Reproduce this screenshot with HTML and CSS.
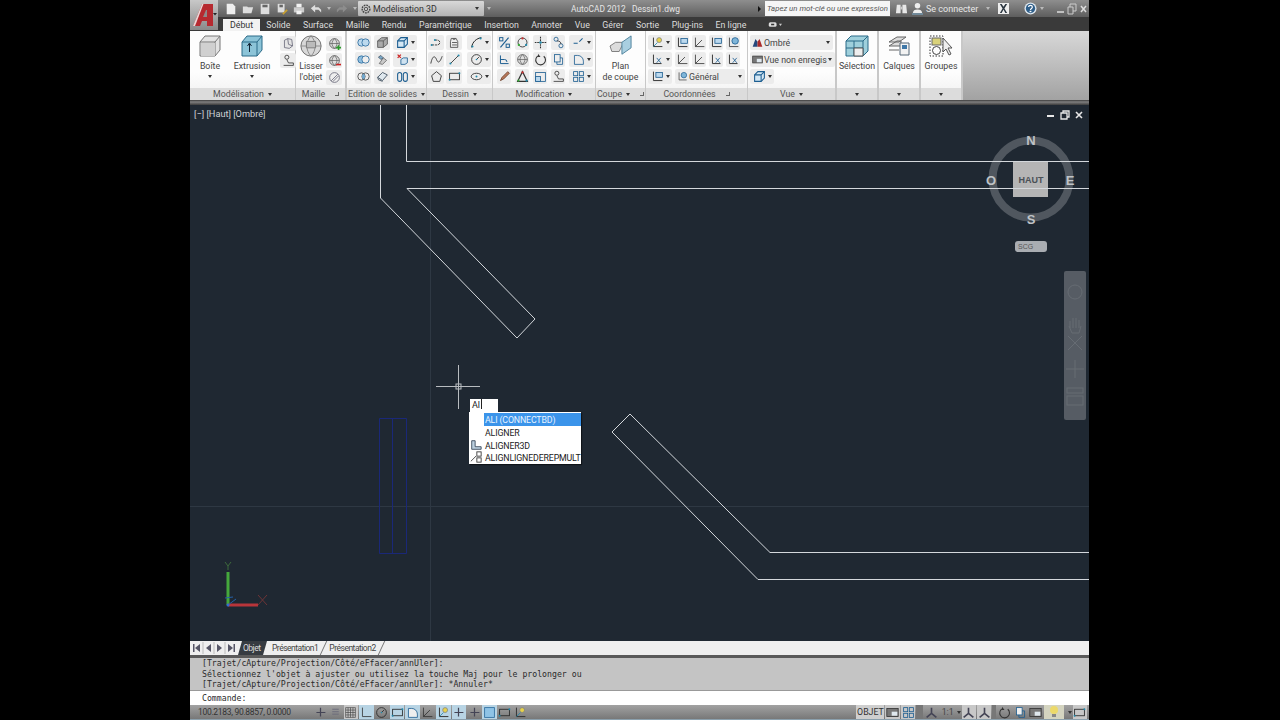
FILE: index.html
```html
<!DOCTYPE html>
<html>
<head>
  <title>AutoCAD 2012 - Dessin1.dwg</title>
  <link rel="stylesheet" href="styles.css">
</head>
<body>
  <svg class="defs">
    <symbol id="union" viewBox="0 0 16 16"><circle cx="5.5" cy="8" r="4.5" fill="#bcd9ee" stroke="#2a6a9c"/><circle cx="10.5" cy="8" r="4.5" fill="#bcd9ee" stroke="#2a6a9c"/></symbol>
    <symbol id="subtract" viewBox="0 0 16 16"><circle cx="5.5" cy="8" r="4.5" fill="#8fbfe0" stroke="#2a6a9c"/><circle cx="10.5" cy="8" r="4.5" fill="#eee" stroke="#2a6a9c"/></symbol>
    <symbol id="intersect" viewBox="0 0 16 16"><circle cx="5.5" cy="8" r="4.5" fill="#eee" stroke="#444"/><circle cx="10.5" cy="8" r="4.5" fill="none" stroke="#444"/><path d="M8 4.3a4.5 4.5 0 0 1 0 7.4a4.5 4.5 0 0 1 0-7.4" fill="#6fa8d0"/></symbol>
    <symbol id="solid" viewBox="0 0 16 16"><path d="M2 6l5-4h7v8l-5 4H2z" fill="#aaa" stroke="#555"/><path d="M2 6h7v8M9 6l5-4" fill="none" stroke="#555"/></symbol>
    <symbol id="cubeblue" viewBox="0 0 16 16"><path d="M2 6l4-4h8v8l-4 4H2z" fill="#d5e8f5" stroke="#1b5d90" stroke-width="1.3"/><path d="M2 6h8v8M10 6l4-4" fill="none" stroke="#1b5d90" stroke-width="1.3"/></symbol>
    <symbol id="brush" viewBox="0 0 16 16"><path d="M4 13l5-7 4 3-5 5z" fill="#c9c9c9" stroke="#666"/><path d="M3 5l3-2 3 3-3 2z" fill="#7aa9c9" stroke="#456"/></symbol>
    <symbol id="press" viewBox="0 0 16 16"><path d="M3 4l4-2 5 1 1 8-4 3-6-1z" fill="#e4e4e4" stroke="#667"/><path d="M7 2l1 7 5 2" fill="none" stroke="#667"/></symbol>
    <symbol id="xbox" viewBox="0 0 16 16"><path d="M2 2l4 4M6 2l-4 4" stroke="#c22" stroke-width="1.5"/><path d="M6 8l3-2h5v6l-3 2H6z" fill="#cfe2f0" stroke="#1b5d90"/></symbol>
    <symbol id="slab" viewBox="0 0 16 16"><path d="M2 9l6-6 6 3-6 7z" fill="#dfe8ee" stroke="#345"/><path d="M2 9l1 3 5 2" fill="none" stroke="#345"/></symbol>
    <symbol id="shell" viewBox="0 0 16 16"><rect x="2" y="3" width="5" height="11" rx="2.5" fill="none" stroke="#1b5d90" stroke-width="1.3"/><rect x="9" y="3" width="5" height="11" rx="2.5" fill="none" stroke="#1b5d90" stroke-width="1.3"/></symbol>
    <symbol id="polyline" viewBox="0 0 16 16"><path d="M2 11h7a3 3 0 0 0 0-6H6" fill="none" stroke="#222" stroke-dasharray="3 1"/><circle cx="2" cy="11" r="1.2" fill="#28a"/><circle cx="6" cy="5" r="1.2" fill="#28a"/></symbol>
    <symbol id="hatch" viewBox="0 0 16 16"><path d="M4 3h6l2 4v7H3V7z" fill="#eee" stroke="#444"/><path d="M5 8h6M5 11h6M6 4h3" stroke="#444"/></symbol>
    <symbol id="arc" viewBox="0 0 16 16"><path d="M2 14C3 7 8 3 14 2" fill="none" stroke="#222" stroke-width="1.2"/><circle cx="3" cy="13" r="1.3" fill="#28a"/><circle cx="13" cy="3" r="1.3" fill="#28a"/></symbol>
    <symbol id="spline" viewBox="0 0 16 16"><path d="M1 13C3 3 6 3 8 8s4 4 7-4" fill="none" stroke="#222"/></symbol>
    <symbol id="line" viewBox="0 0 16 16"><path d="M3 13L13 3" stroke="#222"/><circle cx="3" cy="13" r="1.3" fill="#28a"/><circle cx="13" cy="3" r="1.3" fill="#28a"/></symbol>
    <symbol id="circle" viewBox="0 0 16 16"><circle cx="8" cy="8" r="6" fill="none" stroke="#222"/><path d="M8 8l3-3" stroke="#222"/><circle cx="8" cy="8" r="1" fill="#28a"/></symbol>
    <symbol id="polygon" viewBox="0 0 16 16"><path d="M8 2l6 5-2 7H4L2 7z" fill="none" stroke="#222"/></symbol>
    <symbol id="rect" viewBox="0 0 16 16"><rect x="2" y="4" width="12" height="8" fill="none" stroke="#222"/><circle cx="2" cy="12" r="1.2" fill="#28a"/><circle cx="14" cy="4" r="1.2" fill="#28a"/></symbol>
    <symbol id="ellipse" viewBox="0 0 16 16"><ellipse cx="8" cy="8" rx="6.5" ry="4" fill="none" stroke="#222"/><circle cx="8" cy="8" r="1.2" fill="#28a"/></symbol>
    <symbol id="percent" viewBox="0 0 16 16"><path d="M13 2L3 14" stroke="#1b5d90" stroke-width="1.4"/><rect x="2" y="2" width="4" height="4" fill="none" stroke="#1b5d90" stroke-width="1.2"/><rect x="10" y="10" width="4" height="4" fill="none" stroke="#1b5d90" stroke-width="1.2"/></symbol>
    <symbol id="fillet" viewBox="0 0 16 16"><path d="M3 3v10h10M3 8h5a3 3 0 0 1 3 3" fill="none" stroke="#1b5d90" stroke-width="1.2"/></symbol>
    <symbol id="pencil" viewBox="0 0 16 16"><path d="M3 13l2-4 7-7 2 2-7 7z" fill="#b9785a" stroke="#6b3d28"/></symbol>
    <symbol id="rotate3d" viewBox="0 0 16 16"><circle cx="8" cy="8" r="5.5" fill="none" stroke="#222"/><circle cx="8" cy="3" r="1.4" fill="#c33"/><circle cx="3.5" cy="11" r="1.4" fill="#3a3"/><circle cx="12.5" cy="11" r="1.4" fill="#28a"/></symbol>
    <symbol id="move" viewBox="0 0 16 16"><path d="M8 1v14M1 8h14" stroke="#333" stroke-dasharray="2 1" stroke-width="1.3"/><circle cx="8" cy="8" r="1.6" fill="#28a"/></symbol>
    <symbol id="link" viewBox="0 0 16 16"><circle cx="5" cy="4" r="2.5" fill="none" stroke="#1b5d90"/><circle cx="11" cy="12" r="2.5" fill="none" stroke="#1b5d90"/><path d="M6 6c4 0 5 2 5 4" fill="none" stroke="#333"/></symbol>
    <symbol id="trim" viewBox="0 0 16 16"><path d="M2 9h5M9 7l4-4" stroke="#1b5d90" stroke-width="1.3"/></symbol>
    <symbol id="sphere" viewBox="0 0 16 16"><circle cx="8" cy="8" r="6" fill="#ddd" stroke="#555"/><path d="M2 8h12M8 2c-4 4-4 8 0 12M8 2c4 4 4 8 0 12" fill="none" stroke="#555" stroke-width=".8"/></symbol>
    <symbol id="meshadd" viewBox="0 0 16 16"><use href="#sphere"/><path d="M10 13h6M13 10v6" stroke="#2a9a2a" stroke-width="2"/></symbol>
    <symbol id="meshsub" viewBox="0 0 16 16"><use href="#sphere"/><path d="M10 13h6" stroke="#c22" stroke-width="2"/></symbol>
    <symbol id="nomesh" viewBox="0 0 16 16"><circle cx="8" cy="8" r="6" fill="#eee" stroke="#667"/><path d="M4 12l8-8M6 13l7-7" stroke="#667"/></symbol>
    <symbol id="spin" viewBox="0 0 16 16"><path d="M12 4a6 6 0 1 1-6-1" fill="none" stroke="#333" stroke-width="1.3"/><path d="M5 1v4h3z" fill="#333"/></symbol>
    <symbol id="copy" viewBox="0 0 16 16"><rect x="3" y="2" width="7" height="9" fill="#eee" stroke="#1b5d90"/><path d="M10 6h3v8H6v-3" fill="none" stroke="#1b5d90"/></symbol>
    <symbol id="round" viewBox="0 0 16 16"><path d="M3 14V3h4a7 7 0 0 1 7 7v4z" fill="#eee" stroke="#1b5d90"/></symbol>
    <symbol id="align" viewBox="0 0 16 16"><path d="M8 2L2 14h12z" fill="none" stroke="#333" stroke-width="1.4"/><circle cx="8" cy="3" r="1.4" fill="#c33"/><circle cx="3" cy="13" r="1.4" fill="#3a3"/><circle cx="13" cy="13" r="1.4" fill="#28a"/></symbol>
    <symbol id="anno" viewBox="0 0 16 16"><path d="M8 2v7M8 9l-6 5M8 9l6 5" stroke="#445" stroke-width="2" fill="none"/></symbol>
    <symbol id="scale" viewBox="0 0 16 16"><rect x="2" y="3" width="12" height="11" fill="none" stroke="#1b5d90"/><rect x="2" y="8" width="6" height="6" fill="#bcd9ee" stroke="#1b5d90"/></symbol>
    <symbol id="stretch" viewBox="0 0 16 16"><circle cx="6" cy="4" r="2.5" fill="none" stroke="#333"/><path d="M2 14h12v-3H8L6 7" fill="none" stroke="#333"/></symbol>
    <symbol id="array" viewBox="0 0 16 16"><rect x="2" y="2" width="5" height="5" fill="none" stroke="#1b5d90"/><rect x="9" y="2" width="5" height="5" fill="none" stroke="#1b5d90"/><rect x="2" y="9" width="5" height="5" fill="none" stroke="#1b5d90"/><rect x="9" y="9" width="5" height="5" fill="none" stroke="#1b5d90"/></symbol>
    <symbol id="ucs" viewBox="0 0 16 16"><path d="M3 2v11h11" fill="none" stroke="#333" stroke-width="1.2"/><path d="M3 13l5-5" stroke="#28a"/><circle cx="10" cy="5" r="3" fill="#e8d24a" stroke="#887"/></symbol>
    <symbol id="ucsx" viewBox="0 0 16 16"><path d="M3 2v11h10" fill="none" stroke="#333" stroke-width="1.2"/><path d="M7 6l5 6M12 6l-5 6" stroke="#1b5d90"/></symbol>
    <symbol id="ucsb" viewBox="0 0 16 16"><path d="M3 2v11h11" fill="none" stroke="#333" stroke-width="1.2"/><rect x="6" y="3" width="8" height="6" fill="#bcd9ee" stroke="#1b5d90"/></symbol>
    <symbol id="ang" viewBox="0 0 16 16"><path d="M3 2v11h11M3 13l8-8" fill="none" stroke="#333"/></symbol>
    <symbol id="ucsw" viewBox="0 0 16 16"><path d="M3 2v11h11" fill="none" stroke="#333"/><circle cx="10" cy="6" r="4" fill="#7fb5d8" stroke="#1b5d90"/></symbol>
    <symbol id="vdisp" viewBox="0 0 16 16"><rect x="1" y="3" width="14" height="10" fill="#777" stroke="#333"/><rect x="7" y="7" width="7" height="5" fill="#dfe8ee"/></symbol>
    <symbol id="snap" viewBox="0 0 16 16"><path d="M8 2v11M3 8h11" stroke="#445" stroke-width="1.5"/></symbol>
    <symbol id="dots" viewBox="0 0 16 16"><path d="M4 4h8M4 7h8M4 10h8" stroke="#667" stroke-width="1"/></symbol>
    <symbol id="grid" viewBox="0 0 16 16"><path d="M2 2h12v12H2zM5 2v12M8 2v12M11 2v12M2 5h12M2 8h12M2 11h12" fill="none" stroke="#444" stroke-width=".8"/></symbol>
    <symbol id="ortho" viewBox="0 0 16 16"><path d="M3 2v11h11" fill="none" stroke="#333"/></symbol>
    <symbol id="fill" viewBox="0 0 16 16"><rect x="2" y="2" width="12" height="12" fill="#8ec3e6" stroke="#2a6a9c"/></symbol>
  </svg>

  <div class="app">
    <div class="head">
      <div class="app-btn">
        <svg viewBox="0 0 28 30"><path d="M3 26L12 4h11v22h-6v-5h-5l-2 5z" fill="#b62a30"/><path d="M13 17l3-7h1v7z" fill="#8e8a8a"/><path d="M3 26L12 4h1.500L5 26z" fill="#e9d8d8"/><path d="M23 13h4l-2 2.500z" fill="#222"/></svg>
      </div>
      <div class="head-right">
        <div class="title-bar">
          <div class="quick">
            <svg class="q" viewBox="0 0 14 14"><path d="M2 1h7l3 3v9H2z" fill="#eee"/></svg>
            <svg class="q" viewBox="0 0 14 14"><path d="M1 4h5l1 1h6l-2 7H1z" fill="#ddd"/></svg>
            <svg class="q" viewBox="0 0 14 14"><path d="M2 1h10v12H2z" fill="#ddd"/><path d="M4 2h6v3H4z" fill="#666"/></svg>
            <svg class="q" viewBox="0 0 14 14"><path d="M2 1h8v10H2z" fill="#ddd"/><path d="M4 2h4v3H4z" fill="#666"/><path d="M8 13l5-5" stroke="#c9a030" stroke-width="2"/></svg>
            <svg class="q" viewBox="0 0 14 14"><path d="M1 5h12v6H1z" fill="#ccc"/><path d="M4 1h6v4H4zM4 9h6v4H4z" fill="#f2f2f2"/></svg>
            <svg class="q" viewBox="0 0 14 14"><path d="M1 6l5-4v3h4l3 3v3l-3-3H6v3z" fill="#ddd"/></svg>
            <i class="mini"></i>
            <svg class="q" viewBox="0 0 14 14"><path d="M13 6L8 2v3H4L1 8v3l3-3h4v3z" fill="#8d8d8d"/></svg>
            <i class="mini"></i>
          </div>
          <div class="workspace">
            <svg viewBox="0 0 14 14"><circle cx="7" cy="7" r="4.500" fill="none" stroke="#444" stroke-dasharray="2 1" stroke-width="1.600"/><circle cx="7" cy="7" r="2" fill="none" stroke="#444"/></svg>
            <span>Modélisation 3D</span>
            <i class="mini dark"></i>
          </div>
          <i class="mini"></i>
          <div class="doc-title">AutoCAD 2012&nbsp;&nbsp;&nbsp;Dessin1.dwg</div>
          <i class="arrow-right"></i>
          <div class="search">Tapez un mot-clé ou une expression</div>
          <svg class="bino" viewBox="0 0 14 14"><path d="M2 3h4v9H1zM8 3h4l1 9H8z" fill="#e8e8e8"/><path d="M6 5h2v3H6z" fill="#ccc"/></svg>
          <svg class="user" viewBox="0 0 12 14"><circle cx="6" cy="4" r="3" fill="#eee"/><path d="M1 12c0-3 2-4 5-4s5 1 5 4z" fill="#eee"/><path d="M0 13h12" stroke="#7fb5d8"/></svg>
          <span class="login">Se connecter</span>
          <i class="mini"></i>
          <svg class="store" viewBox="0 0 12 14"><path d="M0 1h12v12H0z" fill="#eee"/><path d="M2 2l3 5-3 5h2l2-4 2 4h2L7 7l3-5H8L6 5 4 2z" fill="#2b3640"/></svg>
          <svg class="help" viewBox="0 0 14 14"><circle cx="7" cy="7" r="6.500" fill="#dfe7ee"/><circle cx="7" cy="7" r="5" fill="#2f5f8a"/><path d="M5 5.500c0-2.500 4-2.500 4 0 0 1.500-2 1.500-2 3" fill="none" stroke="#fff" stroke-width="1.300"/><path d="M6 9.500h2v1.500H6z" fill="#fff"/></svg>
          <i class="mini"></i>
          <svg class="win-btns" viewBox="0 0 30 12"><path d="M0 9h7" stroke="#ddd" stroke-width="1.500"/><path d="M11 4h5v7h-5zM13 4V1h6v7h-3" fill="none" stroke="#ccc"/><path d="M24 3l5 6M29 3l-5 6" stroke="#ddd" stroke-width="1.500"/></svg>
        </div>
        <div class="tabs">
          <span class="tab active">Début</span>
          <span class="tab">Solide</span>
          <span class="tab">Surface</span>
          <span class="tab">Maille</span>
          <span class="tab">Rendu</span>
          <span class="tab">Paramétrique</span>
          <span class="tab">Insertion</span>
          <span class="tab">Annoter</span>
          <span class="tab">Vue</span>
          <span class="tab">Gérer</span>
          <span class="tab">Sortie</span>
          <span class="tab">Plug-ins</span>
          <span class="tab">En ligne</span>
          <svg class="tab-extra" viewBox="0 0 18 8"><rect x="1" y="1" width="10" height="6" rx="2" fill="#ddd"/><rect x="4" y="3" width="4" height="2" fill="#333"/><path d="M14 3h4l-2 3z" fill="#ccc"/></svg>
        </div>
      </div>
    </div>

    <div class="ribbon">
      <section class="panel p-model">
        <div class="body">
          <div class="big w-40">
            <svg class="big-ic" viewBox="0 0 22 22"><path d="M1 7l5-6h15v14l-5 6H1z" fill="#e2e2e2" stroke="#777"/><path d="M1 7h15v14M16 7l5-6" fill="none" stroke="#777"/><path d="M2 8h14v13H2z" fill="#d0d0d0"/></svg>
            <span>Boîte</span><i class="mini dark"></i>
          </div>
          <div class="big w-44">
            <svg class="big-ic" viewBox="0 0 22 22"><path d="M1 7l5-6h15v14l-5 6H1z" fill="#8cc4d8" stroke="#2b6a88"/><path d="M1 7h15v14M16 7l5-6" fill="none" stroke="#2b6a88"/><path d="M8.500 17v-8M6.500 11l2-3 2 3" fill="none" stroke="#123"/></svg>
            <span>Extrusion</span><i class="mini dark"></i>
          </div>
          <div class="col">
            <b class="tb"><svg><use href="#press"/></svg></b>
            <b class="tb"><svg><use href="#stretch"/></svg></b>
          </div>
        </div>
        <div class="title">Modélisation <i class="mini dark"></i></div>
      </section>

      <section class="panel p-mesh">
        <div class="body">
          <div class="big w-28">
            <svg class="big-ic sphere" viewBox="0 0 24 24"><circle cx="12" cy="12" r="11" fill="#d8d8d8" stroke="#666"/><path d="M1 12h22M12 1c-6 6-6 16 0 22M12 1c6 6 6 16 0 22" fill="none" stroke="#888"/><path d="M7 7h10v7H7z" fill="#bbb" stroke="#777"/></svg>
            <span>Lisser<br>l'objet</span>
          </div>
          <div class="col tight">
            <b class="tb"><svg><use href="#meshadd"/></svg></b>
            <b class="tb"><svg><use href="#meshsub"/></svg></b>
            <b class="tb"><svg><use href="#nomesh"/></svg></b>
          </div>
        </div>
        <div class="title">Maille <i class="launch"></i></div>
      </section>

      <section class="panel p-solid">
        <div class="body rows">
          <div class="row">
            <b class="tb"><svg><use href="#union"/></svg></b>
            <b class="tb"><svg><use href="#solid"/></svg></b>
            <b class="tb sp"><svg><use href="#cubeblue"/></svg><i class="mini dark"></i></b>
          </div>
          <div class="row">
            <b class="tb"><svg><use href="#subtract"/></svg></b>
            <b class="tb"><svg><use href="#brush"/></svg></b>
            <b class="tb sp"><svg><use href="#xbox"/></svg><i class="mini dark"></i></b>
          </div>
          <div class="row">
            <b class="tb"><svg><use href="#intersect"/></svg></b>
            <b class="tb"><svg><use href="#slab"/></svg></b>
            <b class="tb sp"><svg><use href="#shell"/></svg><i class="mini dark"></i></b>
          </div>
        </div>
        <div class="title">Edition de solides <i class="mini dark"></i></div>
      </section>

      <section class="panel p-draw">
        <div class="body rows">
          <div class="row">
            <b class="tb"><svg><use href="#polyline"/></svg></b>
            <b class="tb"><svg><use href="#hatch"/></svg></b>
            <b class="tb sp"><svg><use href="#arc"/></svg><i class="mini dark"></i></b>
          </div>
          <div class="row">
            <b class="tb"><svg><use href="#spline"/></svg></b>
            <b class="tb"><svg><use href="#line"/></svg></b>
            <b class="tb sp"><svg><use href="#circle"/></svg><i class="mini dark"></i></b>
          </div>
          <div class="row">
            <b class="tb"><svg><use href="#polygon"/></svg></b>
            <b class="tb"><svg><use href="#rect"/></svg></b>
            <b class="tb sp"><svg><use href="#ellipse"/></svg><i class="mini dark"></i></b>
          </div>
        </div>
        <div class="title">Dessin <i class="mini dark"></i></div>
      </section>

      <section class="panel p-modif">
        <div class="body rows">
          <div class="row">
            <b class="tb"><svg><use href="#percent"/></svg></b>
            <b class="tb"><svg><use href="#rotate3d"/></svg></b>
            <b class="tb"><svg><use href="#move"/></svg></b>
            <b class="tb"><svg><use href="#link"/></svg></b>
            <b class="tb sp"><svg><use href="#trim"/></svg><i class="mini dark"></i></b>
          </div>
          <div class="row">
            <b class="tb"><svg><use href="#fillet"/></svg></b>
            <b class="tb"><svg><use href="#sphere"/></svg></b>
            <b class="tb"><svg><use href="#spin"/></svg></b>
            <b class="tb"><svg><use href="#copy"/></svg></b>
            <b class="tb sp"><svg><use href="#round"/></svg><i class="mini dark"></i></b>
          </div>
          <div class="row">
            <b class="tb"><svg><use href="#pencil"/></svg></b>
            <b class="tb"><svg><use href="#align"/></svg></b>
            <b class="tb"><svg><use href="#scale"/></svg></b>
            <b class="tb"><svg><use href="#stretch"/></svg></b>
            <b class="tb sp"><svg><use href="#array"/></svg><i class="mini dark"></i></b>
          </div>
        </div>
        <div class="title">Modification <i class="mini dark"></i></div>
      </section>

      <section class="panel p-cut">
        <div class="body">
          <div class="big w-fill">
            <svg class="big-ic" viewBox="0 0 26 24"><path d="M1 12l6-4h9l-5 10H3z" fill="#dcdcdc" stroke="#777"/><path d="M14 8l10-7v13l-10 7z" fill="#a9cfe0" stroke="#4a7f99"/></svg>
            <span>Plan<br>de coupe</span>
          </div>
        </div>
        <div class="title">Coupe <i class="mini dark"></i><i class="launch"></i></div>
      </section>

      <section class="panel p-coord">
        <div class="body rows">
          <div class="row">
            <b class="tb sp"><svg><use href="#ucs"/></svg><i class="mini dark"></i></b>
            <b class="tb"><svg><use href="#ucsb"/></svg></b>
            <b class="tb"><svg><use href="#ang"/></svg></b>
            <b class="tb"><svg><use href="#ucsb"/></svg></b>
            <b class="tb"><svg><use href="#ucsw"/></svg></b>
          </div>
          <div class="row">
            <b class="tb sp"><svg><use href="#ucsx"/></svg><i class="mini dark"></i></b>
            <b class="tb"><svg><use href="#ang"/></svg></b>
            <b class="tb"><svg><use href="#ang"/></svg></b>
            <b class="tb"><svg><use href="#ucsx"/></svg></b>
            <b class="tb"><svg><use href="#ucsx"/></svg></b>
          </div>
          <div class="row">
            <b class="tb sp"><svg><use href="#ucsb"/></svg><i class="mini dark"></i></b>
            <b class="combo"><svg><use href="#ucsw"/></svg><span>Général</span><i class="mini dark"></i></b>
          </div>
        </div>
        <div class="title">Coordonnées <i class="launch"></i></div>
      </section>

      <section class="panel p-view">
        <div class="body rows">
          <div class="row">
            <b class="combo"><svg viewBox="0 0 16 16"><path d="M1 14l4-11 3 4v7z" fill="#26487c"/><path d="M8 7l3-4 4 11H8z" fill="#a92a2a"/></svg><span>Ombré</span><i class="mini dark"></i></b>
          </div>
          <div class="row">
            <b class="combo"><svg><use href="#vdisp"/></svg><span>Vue non enregis</span><i class="mini dark"></i></b>
          </div>
          <div class="row">
            <b class="tb sp"><svg><use href="#cubeblue"/></svg><i class="mini dark"></i></b>
          </div>
        </div>
        <div class="title">Vue <i class="mini dark"></i></div>
      </section>

      <section class="panel p-tool">
        <div class="body">
          <div class="big w-fill">
            <svg class="big-ic" viewBox="0 0 24 22"><path d="M1 6l5-5h17v15l-5 5H1z" fill="#9fd0dc" stroke="#2b6a88"/><path d="M1 6h17v15M18 6l5-5M1 13h17M9 6v15" fill="none" stroke="#2b6a88"/><path d="M9 13h9v8H9z" fill="#eee" stroke="#555"/></svg>
            <span>Sélection</span>
          </div>
        </div>
        <div class="title"><i class="mini dark"></i></div>
      </section>

      <section class="panel p-tool">
        <div class="body">
          <div class="big w-fill">
            <svg class="big-ic" viewBox="0 0 24 22"><path d="M2 7l8-5h9l-7 5zM2 11l8-5h4v5zM2 15h10" fill="#ddd" stroke="#666"/><path d="M13 8h9v12h-9z" fill="#f2f2f2" stroke="#567"/><path d="M15 10h5v4h-5z" fill="#3f78a8"/></svg>
            <span>Calques</span>
          </div>
        </div>
        <div class="title"><i class="mini dark"></i></div>
      </section>

      <section class="panel p-tool">
        <div class="body">
          <div class="big w-fill">
            <svg class="big-ic" viewBox="0 0 24 22"><rect x="1" y="1" width="13" height="20" fill="none" stroke="#333" stroke-dasharray="1.500 1.500"/><rect x="3" y="3" width="9" height="7" fill="#d9d27a" stroke="#666"/><circle cx="7.500" cy="15.500" r="4" fill="none" stroke="#444"/><path d="M14 3v14l3-3 3 6 2-1-3-6h4z" fill="#eee" stroke="#555"/></svg>
            <span>Groupes</span>
          </div>
        </div>
        <div class="title"><i class="mini dark"></i></div>
      </section>
      <div class="ribbon-empty"></div>
    </div>

    <div class="band"></div>

    <div class="viewport">
      <svg class="drawing" viewBox="190 105 899 536">
        <!-- axes de la grille -->
        <path d="M430.500 105V641M190 506.500H1089" stroke="#2e3843" stroke-width="1" fill="none"/>

        <!-- ViewCube -->
        <circle cx="1031" cy="179" r="38.500" fill="none" stroke="#50575f" stroke-width="8"/>
        <rect x="1013" y="162" width="35" height="35" fill="#b5b5b5"/>
        <text class="cube-face" x="1031" y="183">HAUT</text>
        <text class="cube-dir" x="1031" y="145">N</text>
        <text class="cube-dir" x="1070" y="185">E</text>
        <text class="cube-dir" x="1031" y="224">S</text>
        <text class="cube-dir" x="991" y="185">O</text>
        <rect x="1015" y="241" width="32" height="11" rx="3" fill="#a9adb2"/>
        <text class="scg" x="1018" y="249">SCG</text>

        <!-- barre de navigation -->
        <rect x="1064" y="271" width="22" height="149" rx="2" fill="#565c64"/>
        <g fill="none" stroke="#666c73">
          <circle cx="1075" cy="292" r="7"/>
          <path d="M1070 328v-7M1073 328v-10M1076 328v-10M1079 328v-8M1069 326l3 7h7l2-7"/>
          <path d="M1068 336l14 14M1082 336l-14 14"/>
          <path d="M1075 360v18M1066 369h18"/>
          <rect x="1067" y="388" width="16" height="5"/>
          <rect x="1067" y="396" width="16" height="9"/>
        </g>

        <!-- géométrie -->
        <g fill="none" stroke="#d4d8dc" stroke-width="1">
          <path d="M380.500 105V198L517 338L535 319L407 188.500H1089"/>
          <path d="M406.500 105V161.500H1089"/>
          <path d="M1089 552.500H770L630 414L612 432L758 579.500H1089"/>
        </g>
        <g fill="none" stroke="#1a2878" stroke-width="1">
          <path d="M379.500 418.500H406.500V553.500H379.500ZM392.500 418V553"/>
        </g>

        <!-- repère SCU -->
        <path d="M228 605V572" stroke="#45a83c" stroke-width="3"/>
        <path d="M228 605H258" stroke="#b8353a" stroke-width="3"/>
        <path d="M225 598l8-1M228 605l8-6" stroke="#2560a8" stroke-width="1" fill="none"/>
        <path d="M225 562l3 4 3-4M228 566v4" stroke="#3d6a3c" fill="none"/>
        <path d="M258 595l9 10M267 595l-9 10" stroke="#6e3436" fill="none"/>
        <circle cx="228" cy="605" r="1.500" fill="#2f6fd0"/>

        <!-- réticule -->
        <path d="M436 386.500H480M458.500 365V409" stroke="#b8bcc0" fill="none"/>
        <rect x="456" y="384" width="5" height="5" fill="none" stroke="#b8bcc0"/>
      </svg>

      <div class="view-label">[−] [Haut] [Ombré]</div>
      <svg class="view-btns" viewBox="0 0 36 10"><path d="M0 6h7" stroke="#e8e8e8" stroke-width="2"/><path d="M14 3h6v6h-6zM16 3V1h6v6h-2" fill="none" stroke="#e8e8e8" stroke-width="1.300"/><path d="M29 2l6 6M35 2l-6 6" stroke="#e8e8e8" stroke-width="1.600"/></svg>

      <div class="dyn-input">Al<i></i></div>
      <div class="suggest">
        <div class="sug active">ALI (CONNECTBD)</div>
        <div class="sug">ALIGNER</div>
        <div class="sug"><svg viewBox="0 0 14 14"><path d="M2 2v10h11v-3H6V2z" fill="#bcd0e0" stroke="#345"/></svg>ALIGNER3D</div>
        <div class="sug"><svg viewBox="0 0 14 14"><rect x="8" y="1" width="5" height="5" fill="none" stroke="#333"/><rect x="8" y="8" width="5" height="5" fill="none" stroke="#333"/><path d="M1 12l6-6" stroke="#333"/></svg>ALIGNLIGNEDEREPMULT</div>
      </div>
    </div>

    <div class="layouts">
      <svg class="nav-arrows" viewBox="0 0 44 14">
        <g fill="#556"><path d="M2 3h1.500v8H2zM9 3v8L4 7z"/><path d="M20 3v8l-5-4z"/><path d="M26 3v8l5-4z"/><path d="M37 3v8l5-4zM42.500 3H44v8h-1.500z"/></g>
        <path d="M12 1v12M23 1v12M34 1v12" stroke="#bbb"/>
      </svg>
      <span class="l-tab current">Objet</span>
      <span class="l-tab">Présentation1</span>
      <span class="l-tab">Présentation2</span>
    </div>

    <div class="command">
      <div class="history">
        <div>[Trajet/cApture/Projection/Côté/eFfacer/annUler]:</div>
        <div>Sélectionnez l'objet à ajuster ou utilisez la touche Maj pour le prolonger ou</div>
        <div>[Trajet/cApture/Projection/Côté/eFfacer/annUler]: *Annuler*</div>
      </div>
      <div class="prompt">Commande:</div>
    </div>

    <div class="status">
      <span class="coords">100.2183, 90.8857, 0.0000</span>
      <div class="status-icons">
        <b class="st"><svg><use href="#snap"/></svg></b>
        <b class="st"><svg><use href="#dots"/></svg></b>
        <b class="st light"><svg><use href="#grid"/></svg></b>
        <b class="st on"><svg><use href="#ortho"/></svg></b>
        <b class="st"><svg><use href="#circle"/></svg></b>
        <b class="st on"><svg><use href="#rect"/></svg></b>
        <b class="st on"><svg><use href="#round"/></svg></b>
        <b class="st"><svg><use href="#ang"/></svg></b>
        <b class="st on"><svg><use href="#ucs"/></svg></b>
        <b class="st on"><svg><use href="#snap"/></svg></b>
        <b class="st"><svg><use href="#snap"/></svg></b>
        <b class="st on"><svg><use href="#fill"/></svg></b>
        <b class="st"><svg><use href="#rect"/></svg></b>
        <b class="st"><svg><use href="#ucs"/></svg></b>
      </div>
      <div class="status-right">
        <span class="objet">OBJET</span>
        <b class="st light"><svg><use href="#vdisp"/></svg></b>
        <b class="st light"><svg><use href="#array"/></svg></b>
        <i class="gap"></i>
        <b class="st"><svg><use href="#anno"/></svg></b>
        <span class="ratio">1:1</span>
        <i class="mini dark"></i>
        <b class="st light"><svg><use href="#anno"/></svg></b>
        <b class="st light"><svg><use href="#anno"/></svg></b>
        <i class="gap small"></i>
        <b class="st"><svg><use href="#spin"/></svg></b>
        <b class="st"><svg><use href="#copy"/></svg></b>
        <b class="st"><svg><use href="#vdisp"/></svg></b>
        <b class="bulb"><svg viewBox="0 0 14 14"><circle cx="7" cy="5" r="4" fill="#ecd96a"/><path d="M5 9h4v3H5z" fill="#888"/></svg></b>
        <i class="mini dark"></i>
        <b class="st light"><svg><use href="#rect"/></svg></b>
      </div>
    </div>
  </div>
</body>
</html>
```

FILE: styles.css
```css
body {
  background-color: black;
  margin: 0;
  padding: 0;
  overflow: hidden;
  font-family: Roboto, "Liberation Sans", sans-serif;
  font-size: 8.8px;
  color: #333;
}

.defs {
  display: none;
}

i, b {
  font-style: normal;
  font-weight: normal;
}

.app {
  width: 899px;
  height: 720px;
  margin-left: 190px;
  display: flex;
  flex-direction: column;
  background-color: #555;
}

/* tiny dropdown triangle */
.mini {
  display: inline-block;
  width: 0;
  height: 0;
  border-left: 2.5px solid transparent;
  border-right: 2.5px solid transparent;
  border-top: 3px solid #bbb;
  flex: none;
}

.mini.dark {
  border-top-color: #333;
}

.launch {
  display: inline-block;
  width: 3px;
  height: 3px;
  margin-left: 6px;
  border-right: 1px solid #666;
  border-bottom: 1px solid #666;
}

/* header */
.head {
  display: flex;
  height: 31px;
  flex: none;
  background-color: #3a3a3a;
}

.app-btn {
  width: 28px;
  height: 30px;
  flex: none;
  background: linear-gradient(#c8c8c8, #8a8a8a);
}

.app-btn svg {
  display: block;
  width: 28px;
  height: 30px;
}

.head-right {
  flex: 1;
  min-width: 0;
  display: flex;
  flex-direction: column;
}

.title-bar {
  height: 17px;
  flex: none;
  display: flex;
  align-items: center;
  background: linear-gradient(#8e8e8e, #5e5e5e);
  color: #eee;
}

.quick {
  display: flex;
  align-items: center;
  gap: 5px;
  margin-left: 7px;
  width: 133px;
}

.q {
  width: 12px;
  height: 12px;
  flex: none;
}

.workspace {
  width: 126px;
  height: 15px;
  box-sizing: border-box;
  padding: 0 5px 0 2px;
  display: flex;
  align-items: center;
  gap: 1px;
  background: linear-gradient(#d8d8d8, #b4b4b4);
  color: #333;
  font-size: 8.8px;
  border-radius: 1px;
}

.workspace svg {
  width: 12px;
  height: 12px;
}

.workspace span {
  flex: 1;
}

.title-bar > .mini {
  margin-left: 3px;
}

.doc-title {
  margin-left: 80px;
  width: 187px;
  font-size: 8.4px;
  color: #e6e6e6;
  white-space: nowrap;
}

.arrow-right {
  width: 0;
  height: 0;
  border-top: 3px solid transparent;
  border-bottom: 3px solid transparent;
  border-left: 3px solid #111;
}

.search {
  width: 125px;
  height: 15px;
  margin-left: 4px;
  background-color: #f5f5f5;
  color: #555;
  font-style: italic;
  font-size: 7.8px;
  line-height: 15px;
  padding-left: 2px;
  box-sizing: border-box;
  white-space: nowrap;
  overflow: hidden;
}

.bino {
  width: 13px;
  height: 13px;
  margin-left: 5px;
  flex: none;
}

.user {
  width: 11px;
  height: 13px;
  margin-left: 4px;
  flex: none;
}

.login {
  margin-left: 3px;
  width: 57px;
  font-size: 9px;
  color: #e8e8e8;
  white-space: nowrap;
  flex: none;
}

.store {
  width: 11px;
  height: 13px;
  margin-left: 8px;
  flex: none;
}

.help {
  width: 13px;
  height: 13px;
  margin-left: 15px;
  flex: none;
}

.win-btns {
  margin-left: 13px;
  width: 30px;
  height: 12px;
  flex: none;
}

.tabs {
  flex: 1;
  display: flex;
  align-items: flex-end;
  color: #ddd;
  padding-left: 5px;
}

.tab {
  height: 12px;
  line-height: 12px;
  padding: 0 6.25px;
  white-space: nowrap;
}

.tab.active {
  background-color: #f2f2f2;
  color: #333;
  padding: 0;
  width: 37px;
  text-align: center;
}

.tab-extra {
  width: 14px;
  height: 7px;
  margin: 0 0 3px 15px;
}

/* ribbon */
.ribbon {
  height: 69px;
  flex: none;
  display: flex;
  gap: 1px;
  background-color: #c8c8c8;
}

.panel {
  display: flex;
  flex-direction: column;
  flex: none;
  background: linear-gradient(#fdfdfd 60%, #efefef);
}

.panel .body {
  flex: 1;
  display: flex;
  min-height: 0;
}

.panel .title {
  height: 12px;
  flex: none;
  display: flex;
  align-items: center;
  justify-content: center;
  gap: 4px;
  background-color: #dcdcdc;
  color: #555;
  white-space: nowrap;
}

.p-model { width: 105px; }
.p-mesh { width: 49px; margin-right: 1px; }
.p-solid { width: 79px; }
.p-draw { width: 65px; }
.p-modif { width: 102px; }
.p-cut { width: 49px; }
.p-coord { width: 101px; }
.p-view { width: 87px; margin-right: 1px; }
.p-tool { width: 40px; margin-right: 1px; }

.ribbon-empty {
  flex: 1;
  background: linear-gradient(#d8d8d8, #a2a2a2);
}

.big {
  display: flex;
  flex-direction: column;
  align-items: center;
  padding-top: 4px;
  line-height: 11px;
  color: #444;
  text-align: center;
  flex: none;
}

.big span {
  margin-top: 4px;
}

.big .mini {
  margin-top: 3px;
}

.big-ic {
  width: 24px;
  height: 22px;
  flex: none;
}

.w-40 { width: 40px; }
.w-44 { width: 44px; }
.w-28 { width: 28px; margin-left: 1px; }
.w-fill { flex: 1; }

.col {
  display: flex;
  flex-direction: column;
  gap: 2px;
  padding-top: 5px;
  margin-left: 6px;
}

.col.tight {
  margin-left: 1px;
}

.rows {
  flex-direction: column;
  gap: 2px;
  padding: 4px 0 0 8px;
}

.p-draw .rows {
  padding-left: 1px;
}

.p-modif .rows {
  padding-left: 4px;
}

.p-coord .rows,
.p-view .rows {
  padding-left: 2px;
}

.row {
  display: flex;
  gap: 2px;
  height: 15px;
}

.p-solid .row {
  gap: 3px;
}

.p-draw .tb.sp {
  margin-left: 3px;
}

.p-modif .row {
  gap: 4px;
}

.p-coord .row {
  gap: 3px;
}

.tb {
  width: 16px;
  height: 15px;
  flex: none;
  display: flex;
  align-items: center;
  justify-content: center;
  gap: 2px;
  background-color: #ececec;
  border-radius: 2px;
}

.p-modif .tb,
.p-coord .tb {
  width: 14px;
}

.tb svg {
  width: 13px;
  height: 13px;
  flex: none;
}

.tb.sp,
.p-modif .tb.sp,
.p-coord .tb.sp {
  width: 24px;
}

.combo {
  flex: 1;
  height: 15px;
  display: flex;
  align-items: center;
  gap: 1px;
  padding: 0 3px 0 2px;
  background-color: #ececec;
  color: #444;
  white-space: nowrap;
  border-radius: 2px;
}

.combo svg {
  width: 11px;
  height: 11px;
  flex: none;
}

.combo span {
  flex: 1;
}

.p-coord .row:last-child {
  margin-right: 2px;
}

.p-view .row {
  margin-right: 2px;
}

.band {
  height: 5px;
  flex: none;
  background: linear-gradient(#3c3c3c, #808080 40%, #3c3c3c);
}

/* drawing area */
.viewport {
  position: relative;
  flex: 1;
  min-height: 0;
  background-color: #1f2832;
  overflow: hidden;
}

.drawing {
  position: absolute;
  left: 0;
  top: 0;
  width: 899px;
  height: 536px;
}

.cube-face {
  font-family: "Liberation Sans", sans-serif;
  font-size: 9px;
  font-weight: bold;
  fill: #4a5056;
  text-anchor: middle;
}

.cube-dir {
  font-family: "Liberation Sans", sans-serif;
  font-size: 13px;
  font-weight: bold;
  fill: #bfc3c7;
  text-anchor: middle;
}

.scg {
  font-family: "Liberation Sans", sans-serif;
  font-size: 7px;
  fill: #555;
}

.view-label {
  position: absolute;
  left: 4px;
  top: 3px;
  font-size: 9.2px;
  line-height: 12px;
  color: #cfd3d6;
}

.view-btns {
  position: absolute;
  right: 6px;
  top: 5px;
  width: 36px;
  height: 10px;
}

.dyn-input {
  position: absolute;
  left: 280px;
  top: 294px;
  width: 28px;
  height: 13px;
  padding-left: 2px;
  box-sizing: border-box;
  background-color: white;
  color: #222;
  font-size: 9px;
  line-height: 13px;
}

.dyn-input i {
  display: inline-block;
  width: 1px;
  height: 10px;
  margin-left: 1px;
  background-color: #222;
  vertical-align: -1px;
}

.suggest {
  position: absolute;
  left: 279px;
  top: 307px;
  width: 112px;
  height: 52px;
  padding: 1px 0 0 15px;
  box-sizing: border-box;
  background-color: white;
  color: #222;
  letter-spacing: -0.15px;
  box-shadow: 1px 1px 1px rgba(0, 0, 0, 0.5);
}

.sug {
  position: relative;
  height: 12.5px;
  line-height: 14.5px;
  padding-left: 1px;
  white-space: nowrap;
}

.sug.active {
  height: 13px;
  background-color: #3b94ea;
  color: #e8f3ff;
}

.sug svg {
  position: absolute;
  left: -14px;
  top: 0;
  width: 12px;
  height: 12px;
}

/* layout tabs */
.layouts {
  height: 14px;
  flex: none;
  display: flex;
  align-items: center;
  background-color: #efefef;
  color: #444;
  font-size: 8.5px;
  letter-spacing: -0.5px;
}

.nav-arrows {
  width: 44px;
  height: 14px;
  margin: 0 3px 0 1px;
  flex: none;
}

.l-tab {
  position: relative;
  height: 14px;
  line-height: 14px;
  padding: 0 6px 0 5px;
  white-space: nowrap;
}

.l-tab::after {
  content: "";
  position: absolute;
  right: 0;
  top: 0;
  height: 14px;
  border-right: 1px solid #777;
  transform: skewX(-25deg);
}

.l-tab.current {
  background-color: #363b41;
  color: #ddd;
  width: 29px;
  box-sizing: border-box;
  padding: 0 0 0 5px;
  clip-path: polygon(4px 0, 100% 0, calc(100% - 4px) 100%, 0 100%);
}

.l-tab.current::after {
  content: none;
}

/* command line */
.command {
  flex: none;
  height: 50px;
  display: flex;
  flex-direction: column;
  border-top: 3px solid #5a5a5a;
  box-sizing: border-box;
  background-color: #c4c4c4;
  font-family: "DejaVu Sans Mono", "Liberation Mono", monospace;
  font-size: 8.2px;
  color: #2a2a2a;
}

.history {
  flex: 1;
  padding: 0 0 0 12px;
  line-height: 10.5px;
  border-bottom: 1px solid #999;
}

.prompt {
  height: 14px;
  line-height: 15px;
  padding-left: 12px;
  background-color: white;
}

/* status bar */
.status {
  height: 15px;
  flex: none;
  display: flex;
  align-items: center;
  background: linear-gradient(#a2a2a2, #787878);
  border-bottom: 1px solid #8ba0ad;
  box-sizing: border-box;
  color: #333;
}

.coords {
  width: 123px;
  padding-left: 8px;
  box-sizing: border-box;
  white-space: nowrap;
  font-size: 8.5px;
  letter-spacing: -0.3px;
}

.status-icons {
  display: flex;
  gap: 1px;
}

.st {
  width: 14.4px;
  height: 14px;
  flex: none;
  display: flex;
  align-items: center;
  justify-content: center;
}

.st svg {
  width: 13px;
  height: 13px;
}

.st.on {
  background-color: #b8d4e4;
}

.st.light {
  background-color: #c8c8c8;
}

.status-right {
  margin-left: auto;
  display: flex;
  align-items: center;
  gap: 1px;
  padding-right: 2px;
}

.objet {
  width: 28px;
  height: 14px;
  line-height: 14px;
  text-align: center;
  background-color: #cfcfcf;
}

.gap {
  width: 7px;
  height: 14px;
  background-color: #777;
}

.gap.small {
  width: 4px;
}

.ratio {
  color: #444;
  margin: 0 2px;
}

.bulb {
  width: 20px;
  height: 14px;
  margin-right: 3px;
  display: flex;
  justify-content: center;
  background-color: #d4d4c0;
}

.bulb svg {
  width: 14px;
  height: 14px;
}
```
